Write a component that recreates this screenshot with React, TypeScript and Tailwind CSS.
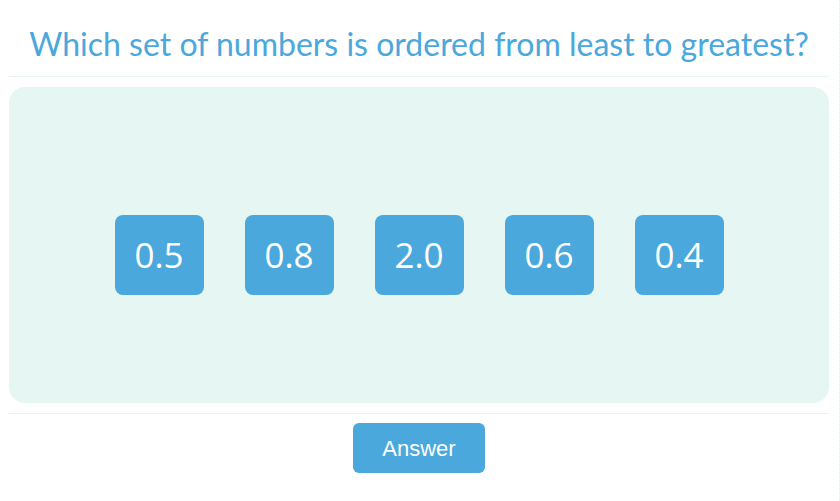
export default function App() {
  const values = ["0.5", "0.8", "2.0", "0.6", "0.4"];
  return (
    <div className="flex h-[501px] w-[840px] flex-col border-r border-dotted border-r-[#e3e8ec] bg-white pl-[9px] pr-[10px]" style={{ fontFamily: "Lato, 'Open Sans', sans-serif" }}>
      <div className="flex h-[77px] items-center justify-center border-b border-[#e9f3f2] pt-[11px]">
        <h1 className="text-[32px] leading-none text-[#4aa8dc]">
          Which set of numbers is ordered from least to greatest?
        </h1>
      </div>
      <div className="mt-[10px] flex h-[316px] items-center justify-center gap-[41px] rounded-2xl bg-[#e6f6f3] pt-5">
        {values.map((v) => (
          <div
            key={v}
            className="flex h-[80px] w-[89px] items-center justify-center rounded-lg bg-[#4aa8dc] text-[35px] text-white"
            style={{ fontFamily: "'Open Sans', sans-serif" }}
          >
            {v}
          </div>
        ))}
      </div>
      <div className="mt-[10px] flex justify-center border-t border-[#e9f3f2] pt-[9px]">
        <button
          className="h-[50px] w-[132px] rounded-md bg-[#4aa8dc] text-[22px] text-white"
          style={{ fontFamily: "'Liberation Sans', Arial, sans-serif" }}
        >
          Answer
        </button>
      </div>
    </div>
  );
}
